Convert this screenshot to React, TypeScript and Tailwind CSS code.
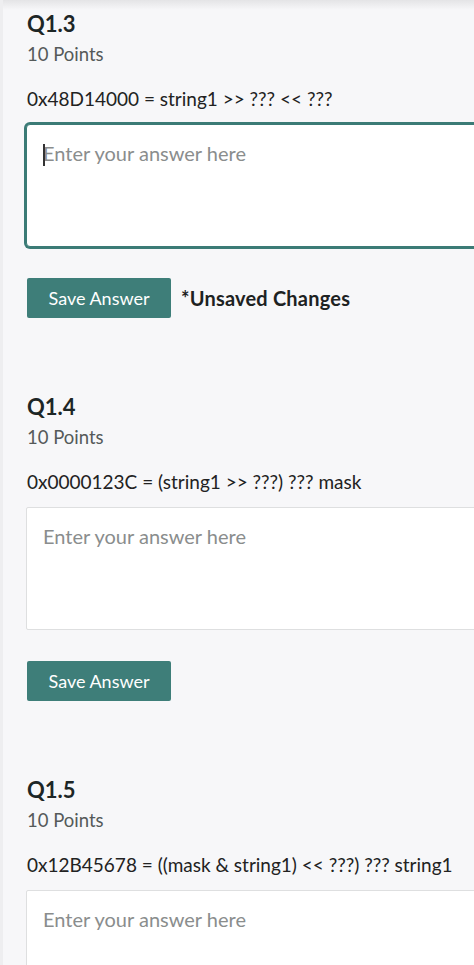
import { useState } from 'react'

type Question = {
  id: string
  points: number
  prompt: string
  focused?: boolean
  unsaved?: boolean
}

const questions: Question[] = [
  { id: 'Q1.3', points: 10, prompt: '0x48D14000 = string1 >> ??? << ???', focused: true, unsaved: true },
  { id: 'Q1.4', points: 10, prompt: '0x0000123C = (string1 >> ???) ??? mask' },
  { id: 'Q1.5', points: 10, prompt: '0x12B45678 = ((mask & string1) << ???) ??? string1' },
]

function QuestionBlock({ q }: { q: Question }) {
  const [value, setValue] = useState('')

  return (
    <section className="pt-[10px] pb-[65px]">
      <h3 className="text-[22px] leading-[28px] font-bold text-[#1d2626]">{q.id}</h3>
      <div className="mt-[4px] text-[18.5px] leading-[24px] text-[#555a5a]">{q.points} Points</div>
      <p className="mt-[21px] text-[19px] leading-[24px] text-[#222]">{q.prompt}</p>

      <div className="relative mt-[13px] w-[520px] -ml-[1px]">
        <textarea
          value={value}
          onChange={(e) => setValue(e.target.value)}
          placeholder="Enter your answer here"
          className={
            q.focused
              ? 'block h-[123px] w-full resize-none rounded-[4px] border border-[#3b7b76] bg-white px-[16px] py-[15px] text-[20px] leading-[26px] text-[#222] shadow-[0_0_0_2px_#3b7b76] outline-none placeholder:text-[#8a8d8d]'
              : 'block h-[123px] w-full resize-none rounded-[2px] border border-[#dedfe0] bg-white px-[16px] py-[15px] text-[20px] leading-[26px] text-[#222] outline-none placeholder:text-[#8a8d8d]'
          }
        />
        {q.focused && value === '' && (
          <span className="absolute left-[17px] top-[20px] h-[22px] w-[2px] bg-[#333]" />
        )}
      </div>

      <div className="mt-[31px] flex items-center gap-[10px]">
        <button className="h-[40px] w-[144px] rounded-[2px] bg-[#3e7e79] text-[18px] text-white">
          Save Answer
        </button>
        {q.unsaved && <span className="text-[20px] tracking-[0.2px] font-bold text-[#1d2222]">*Unsaved Changes</span>}
      </div>
    </section>
  )
}

export default function App() {
  return (
    <div
      className="relative h-[965px] w-full overflow-hidden bg-[#f7f7f9] border-l-[3px] border-[#eeeef0]"
      style={{ fontFamily: 'Lato, "Open Sans", sans-serif' }}
    >
      {/* header shadow */}
      <div className="absolute inset-x-0 top-0 h-[10px] bg-gradient-to-b from-[#e4e4e6] to-[#f7f7f9]" />
      <div className="pl-[24px]">
        {questions.map((q) => (
          <QuestionBlock key={q.id} q={q} />
        ))}
      </div>
    </div>
  )
}
